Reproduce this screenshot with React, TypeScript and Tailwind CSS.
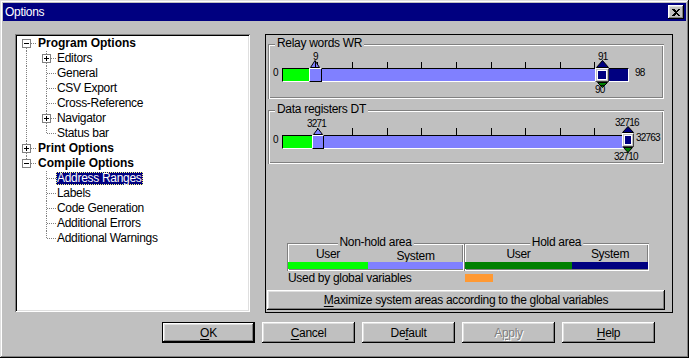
import React from 'react';

type V = 'full' | 'top' | 'bottom' | 'none';
type CellDef = { v: V; h?: boolean; box?: '+' | '-' };
type Row = { label: string; bold?: boolean; selected?: boolean; cells: CellDef[] };

const raised =
  'shadow-[inset_-1px_-1px_0_#000,inset_1px_1px_0_#fff,inset_-2px_-2px_0_#808080,inset_2px_2px_0_#dfdfdf]';
const etched =
  'shadow-[inset_1px_1px_0_#808080,inset_-1px_-1px_0_#fff,inset_2px_2px_0_#fff,inset_-2px_-2px_0_#808080]';

const leaf = (label: string, v: V = 'full'): Row => ({ label, cells: [{ v: 'full' }, { v, h: true }] });
const leaf2 = (label: string, v: V = 'full', selected = false): Row => ({
  label,
  selected,
  cells: [{ v: 'none' }, { v, h: true }],
});

const rows: Row[] = [
  { label: 'Program Options', bold: true, cells: [{ v: 'bottom', h: true, box: '-' }] },
  { label: 'Editors', cells: [{ v: 'full' }, { v: 'full', h: true, box: '+' }] },
  leaf('General'),
  leaf('CSV Export'),
  leaf('Cross-Reference'),
  { label: 'Navigator', cells: [{ v: 'full' }, { v: 'full', h: true, box: '+' }] },
  leaf('Status bar', 'top'),
  { label: 'Print Options', bold: true, cells: [{ v: 'full', h: true, box: '+' }] },
  { label: 'Compile Options', bold: true, cells: [{ v: 'top', h: true, box: '-' }] },
  leaf2('Address Ranges', 'full', true),
  leaf2('Labels'),
  leaf2('Code Generation'),
  leaf2('Additional Errors'),
  leaf2('Additional Warnings', 'top'),
];

function Cell({ w, cx, def }: { w: number; cx: number; def: CellDef }) {
  const x = cx + 0.5;
  const line = { stroke: '#808080', strokeDasharray: '1 1' };
  return (
    <svg width={w} height={15} className="block shrink-0" shapeRendering="crispEdges">
      {def.v === 'full' && <line x1={x} y1={0} x2={x} y2={15} {...line} />}
      {def.v === 'top' && <line x1={x} y1={0} x2={x} y2={8} {...line} />}
      {def.v === 'bottom' && <line x1={x} y1={8} x2={x} y2={15} {...line} />}
      {def.h && <line x1={cx + 1} y1={7.5} x2={w} y2={7.5} {...line} />}
      {def.box && (
        <g>
          <rect x={cx - 3.5} y={3.5} width={8} height={8} fill="#fff" stroke="#808080" />
          <line x1={cx - 2} y1={7.5} x2={cx + 3} y2={7.5} stroke="#000" />
          {def.box === '+' && <line x1={x} y1={5} x2={x} y2={10} stroke="#000" />}
        </g>
      )}
    </svg>
  );
}

function Tree() {
  return (
    <div className="w-[235px] h-[278px] shrink-0 bg-white pt-[2px] pl-[2px] shadow-[inset_1px_1px_0_#808080,inset_-1px_-1px_0_#fff,inset_2px_2px_0_#000,inset_-2px_-2px_0_#dfdfdf]">
      {rows.map((r) => (
        <div key={r.label} className="flex h-[15px] items-center">
          {r.cells.map((c, i) => (
            <Cell key={i} w={i === 0 ? 19 : 20} cx={i === 0 ? 9 : 10} def={c} />
          ))}
          <span
            className={
              r.selected
                ? 'h-[13px] border border-dotted border-[#ffff80] bg-[#000080] px-[0px] text-[12px] leading-[11px] tracking-[-0.3px] text-white'
                : r.bold
                  ? 'ml-[1px] px-[1px] text-[12px] leading-[13px] font-bold text-black'
                  : 'px-[1px] text-[12px] leading-[13px] tracking-[-0.3px] text-black'
            }
          >
            {r.label}
          </span>
        </div>
      ))}
    </div>
  );
}

function Num({ x, y, children }: { x: number; y: number; children: React.ReactNode }) {
  return (
    <span
      className="absolute text-[10px] leading-none tracking-[-0.8px] text-black"
      style={{ left: x, top: y }}
    >
      {children}
    </span>
  );
}

function Tri({ x, y, w, h, fill, down }: { x: number; y: number; w: number; h: number; fill: string; down?: boolean }) {
  const pts = down ? `0.5,0.5 ${w - 0.5},0.5 ${w / 2},${h - 0.5}` : `0.5,${h - 0.5} ${w / 2},0.5 ${w - 0.5},${h - 0.5}`;
  return (
    <svg className="absolute" style={{ left: x, top: y }} width={w} height={h}>
      <polygon points={pts} fill={fill} stroke="#000" strokeWidth={1} />
    </svg>
  );
}

function Ticks({ y, h }: { y: number; h: number }) {
  return (
    <>
      {[49, 84, 119, 153, 188, 223, 257, 292, 326].map((x) => (
        <div key={x} className="absolute w-px bg-black" style={{ left: x, top: y, height: h }} />
      ))}
    </>
  );
}

function LeftHandle({ x, y, w }: { x: number; y: number; w: number }) {
  return (
    <div
      className="absolute h-[14px] border-t border-l border-t-white border-l-white border-r border-b border-r-black border-b-black bg-[#8080ff]"
      style={{ left: x, top: y, width: w }}
    />
  );
}

function RightHandle({ x, y, w }: { x: number; y: number; w: number }) {
  return (
    <div
      className="absolute h-[14px] border-t border-l border-t-white border-l-white border-r border-b border-r-[#404040] border-b-[#404040] bg-[#c0c0c0] p-[1px]"
      style={{ left: x, top: y, width: w }}
    >
      <div className="h-full w-full border border-white bg-[#000080]" />
    </div>
  );
}

function Bar({ y, green, navy }: { y: number; green: number; navy: number }) {
  return (
    <div
      className="absolute left-[14px] flex h-[14px] w-[347px] border-t border-l border-black border-r border-b border-r-white border-b-white"
      style={{ top: y }}
    >
      <div className="h-full bg-[#00ff00]" style={{ width: green }} />
      <div className="h-full flex-1 bg-[#8080ff]" />
      <div className="h-full bg-[#000080]" style={{ width: navy }} />
    </div>
  );
}

function Group({ title, h, children }: { title: string; h: number; children: React.ReactNode }) {
  return (
    <div className={`relative ml-[2px] w-[396px] ${etched}`} style={{ height: h }}>
      <span className="absolute -top-[8px] left-[7px] bg-[#c0c0c0] px-[2px] text-[12px] leading-[14px] tracking-[-0.3px]">
        {title}
      </span>
      {children}
    </div>
  );
}

function Legend({ title, w, cols }: { title: string; w: number; cols: { label: string; w: number; color: string; dy: number }[] }) {
  return (
    <div className={`relative flex h-[28px] flex-col px-[1px] pt-[4px] ${etched}`} style={{ width: w }}>
      <span className="absolute -top-[8px] left-1/2 -translate-x-1/2 bg-[#c0c0c0] px-[2px] text-[12px] leading-[14px] tracking-[-0.3px] whitespace-nowrap">
        {title}
      </span>
      <div className="flex h-[14px]">
        {cols.map((c) => (
          <div
            key={c.label}
            className="text-center text-[12px] leading-[14px] tracking-[-0.3px]"
            style={{ width: c.w, paddingTop: c.dy }}
          >
            {c.label}
          </div>
        ))}
      </div>
      <div className="mt-[1px] flex h-[7px]">
        {cols.map((c) => (
          <div key={c.label} className="h-full" style={{ width: c.w, background: c.color }} />
        ))}
      </div>
    </div>
  );
}

function Btn({ pre, u, post, def, disabled, w = 93 }: { pre: string; u: string; post: string; def?: boolean; disabled?: boolean; w?: number }) {
  return (
    <div
      className={`flex h-[21px] items-center justify-center text-[12px] tracking-[-0.3px] ${raised} ${
        def ? 'border border-black' : ''
      } ${disabled ? 'text-[#808080] [text-shadow:1px_1px_0_#fff]' : 'text-black'}`}
      style={{ width: w }}
    >
      <span>
        {pre}
        <span className="underline underline-offset-[2px]">{u}</span>
        {post}
      </span>
    </div>
  );
}

export default function App() {
  return (
    <div
      className={`flex h-[358px] w-[689px] flex-col bg-[#c0c0c0] p-[3px] font-['Liberation_Sans',Arial,sans-serif] text-black shadow-[inset_-1px_-1px_0_#000,inset_1px_1px_0_#dfdfdf,inset_-2px_-2px_0_#808080,inset_2px_2px_0_#fff]`}
    >
      <div className="flex h-[18px] items-center justify-between bg-[#000080] pl-[2px] pr-[2px]">
        <span className="text-[12px] tracking-[-0.3px] text-white">Options</span>
        <div className={`flex h-[14px] w-[16px] items-center justify-center bg-[#c0c0c0] ${raised}`}>
          <svg width="8" height="7" viewBox="0 0 8 7" shapeRendering="crispEdges">
            <path d="M0 0h2l2 2 2-2h2L5 3.5 8 7H6L4 5 2 7H0l3-3.5z" fill="#000" />
          </svg>
        </div>
      </div>

      <div className="mt-[13px] flex items-start gap-[15px] pl-[12px]">
        <Tree />
        <div className="flex h-[279px] w-[408px] shrink-0 flex-col border border-black">
          <div className="mt-[9px]">
            <Group title="Relay words WR" h={55}>
              <Num x={5} y={24}>0</Num>
              <Ticks y={18} h={6} />
              <Bar y={24} green={27} navy={26} />
              <Tri x={42} y={16} w={10} h={8} fill="#8080ff" />
              <div className="absolute left-[47px] top-[17px] h-[7px] w-px bg-black" />
              <LeftHandle x={41} y={24} w={13} />
              <Num x={45} y={8}>9</Num>
              <Tri x={328} y={16} w={13} h={8} fill="#000080" />
              <RightHandle x={327} y={24} w={14} />
              <Tri x={329} y={38} w={11} h={6} fill="#008000" down />
              <Num x={330} y={8}>91</Num>
              <Num x={327} y={41}>90</Num>
              <Num x={367} y={24}>98</Num>
            </Group>
          </div>
          <div className="mt-[11px]">
            <Group title="Data registers DT" h={54}>
              <Num x={5} y={25}>0</Num>
              <Ticks y={18} h={7} />
              <Bar y={25} green={30} navy={0} />
              <Tri x={45} y={18} w={10} h={7} fill="#8080ff" />
              <LeftHandle x={44} y={25} w={12} />
              <Num x={39} y={9}>3271</Num>
              <Tri x={354} y={16} w={12} h={7} fill="#000080" />
              <RightHandle x={354} y={23} w={12} />
              <Tri x={355} y={37} w={10} h={6} fill="#008000" down />
              <Num x={347} y={8}>32716</Num>
              <Num x={368} y={23}>32763</Num>
              <Num x={346} y={42}>32710</Num>
            </Group>
          </div>

          <div className="ml-[21px] mt-[79px] flex">
            <Legend
              title="Non-hold area"
              w={177}
              cols={[
                { label: 'User', w: 80, color: '#00ff00', dy: 0 },
                { label: 'System', w: 95, color: '#8080ff', dy: 2 },
              ]}
            />
            <Legend
              title="Hold area"
              w={185}
              cols={[
                { label: 'User', w: 107, color: '#008000', dy: 0 },
                { label: 'System', w: 76, color: '#000080', dy: 0 },
              ]}
            />
          </div>
          <div className="ml-[22px] flex h-[14px] items-start">
            <span className="w-[177px] text-[12px] leading-[14px] tracking-[-0.3px]">Used by global variables</span>
            <div className="mt-[3px] h-[8px] w-[28px] bg-[#ff9933]" />
          </div>
          <div className="ml-[1px] mt-[5px]">
            <div className={`flex h-[20px] w-[398px] items-center justify-center text-[12px] tracking-[-0.3px] ${raised}`}>
              <span>
                <span className="underline underline-offset-[2px]">M</span>aximize system areas according to the global variables
              </span>
            </div>
          </div>
        </div>
      </div>

      <div className="mt-[9px] flex gap-[7px] pl-[159px]">
        <Btn pre="" u="O" post="K" def />
        <Btn pre="" u="C" post="ancel" />
        <Btn pre="De" u="f" post="ault" />
        <Btn pre="A" u="p" post="ply" disabled />
        <Btn pre="" u="H" post="elp" />
      </div>
    </div>
  );
}
